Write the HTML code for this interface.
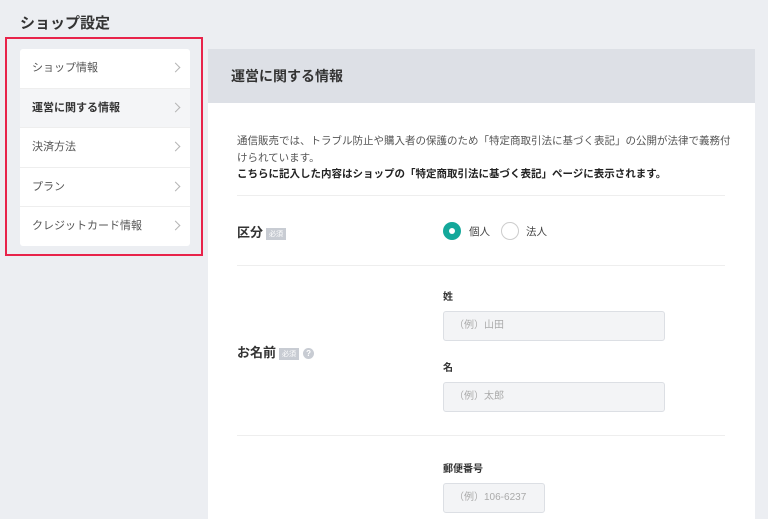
<!DOCTYPE html>
<html><head><meta charset="utf-8"><style>
*{margin:0;padding:0;box-sizing:border-box}
body{width:768px;height:511px;overflow:hidden;background:#eceef2;font-family:"Liberation Sans","Noto Sans CJK JP",sans-serif;color:#333;position:relative}
.title{position:absolute;left:20px;top:12px;font-size:15px;font-weight:bold;color:#333}
.red{position:absolute;left:5px;top:37px;width:198px;height:219px;border:2px solid #e8234a}
.card{position:absolute;left:20px;top:49px;width:170px;height:197px;background:#fff;border-radius:3px;overflow:hidden}
.item{height:39.5px;border-bottom:1px solid #eee;font-size:11px;color:#555;padding-left:12px;line-height:39px;position:relative}
.item:last-child{border-bottom:none}
.item.act{background:#f4f5f7;font-weight:bold;color:#333}
.item:after{content:"";position:absolute;right:11px;top:15px;width:6px;height:6px;border-right:1.2px solid #b5b5b5;border-top:1.2px solid #b5b5b5;transform:rotate(45deg)}
.main{position:absolute;left:208px;top:49px;width:547px;height:470px;background:#fff}
.head{height:54px;background:#dde0e6;font-size:14px;font-weight:bold;line-height:54px;padding-left:23px;color:#333}
.abs{position:absolute}
.p{left:29px;top:84px;font-size:10.5px;line-height:16.5px;color:#555;white-space:nowrap}
.p b{color:#222}
.hr{left:29px;width:488px;height:1px;background:#eee}
.lab{font-size:13px;font-weight:bold;color:#333}
.tag{display:inline-block;background:#c8ccd3;color:#fff;font-size:7px;padding:1px 3px;vertical-align:middle;margin-left:3px;font-weight:normal}
.q{display:inline-block;width:11px;height:11px;border-radius:50%;background:#c8ccd3;color:#fff;font-size:8px;text-align:center;line-height:11px;vertical-align:middle;margin-left:4px}
.in{width:222px;height:30px;background:#f3f4f6;border:1px solid #dcdfe4;border-radius:3px;font-size:10px;color:#aaa;line-height:28px;padding-left:10px}
.sl{font-size:10px;font-weight:bold;color:#333}
</style></head><body>
<div class="title">ショップ設定</div>
<div class="red"></div>
<div class="card">
<div class="item">ショップ情報</div>
<div class="item act">運営に関する情報</div>
<div class="item">決済方法</div>
<div class="item">プラン</div>
<div class="item">クレジットカード情報</div>
</div>
<div class="main">
<div class="head">運営に関する情報</div>
<div class="abs p">通信販売では、トラブル防止や購入者の保護のため「特定商取引法に基づく表記」の公開が法律で義務付<br>けられています。<br><b>こちらに記入した内容はショップの「特定商取引法に基づく表記」ページに表示されます。</b></div>
<div class="abs hr" style="top:146px"></div>
<div class="abs lab" style="left:29px;top:173px">区分<span class="tag">必須</span></div>
<div class="abs" style="left:235px;top:173px;width:18px;height:18px;border-radius:50%;background:#14a89a"><div style="position:absolute;left:6px;top:6px;width:6px;height:6px;border-radius:50%;background:#fff"></div></div>
<div class="abs" style="left:261px;top:175px;font-size:10.5px;color:#444">個人</div>
<div class="abs" style="left:293px;top:173px;width:18px;height:18px;border-radius:50%;border:1px solid #ccc"></div>
<div class="abs" style="left:318px;top:175px;font-size:10.5px;color:#444">法人</div>
<div class="abs hr" style="top:216px"></div>
<div class="abs sl" style="left:235px;top:239px">姓</div>
<div class="abs in" style="left:235px;top:262px">（例）山田</div>
<div class="abs lab" style="left:29px;top:293px">お名前<span class="tag">必須</span><span class="q">?</span></div>
<div class="abs sl" style="left:235px;top:310px">名</div>
<div class="abs in" style="left:235px;top:333px">（例）太郎</div>
<div class="abs hr" style="top:386px"></div>
<div class="abs sl" style="left:235px;top:411px">郵便番号</div>
<div class="abs in" style="left:235px;top:434px;width:102px">（例）106-6237</div>
</div>
</body></html>
